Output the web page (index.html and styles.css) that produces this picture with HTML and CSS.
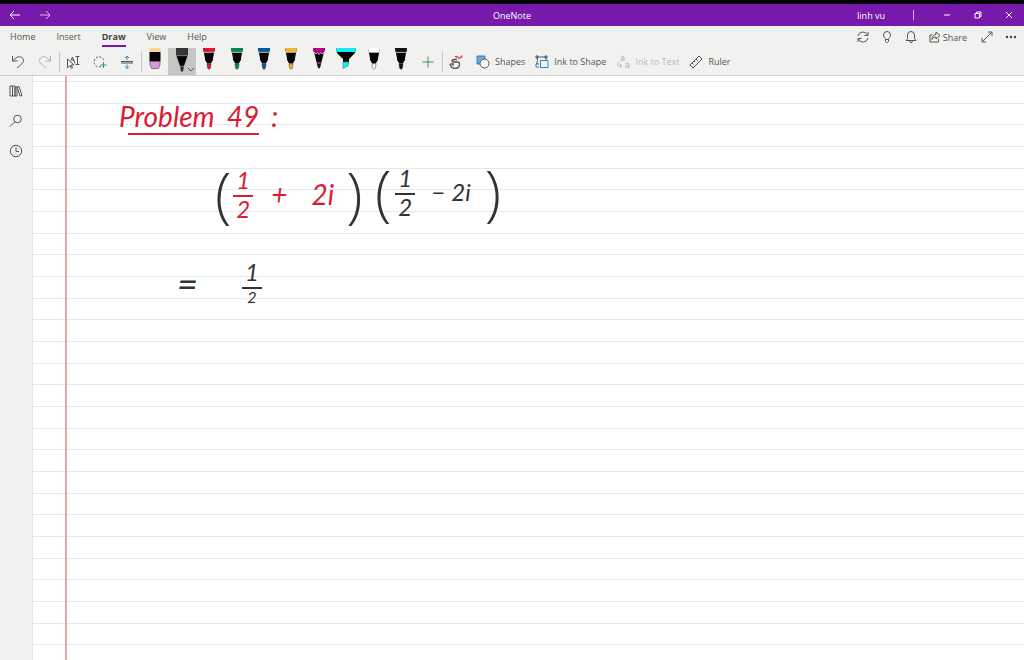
FILE: index.html
```html
<!DOCTYPE html>
<html lang="en">
<head>
<meta charset="utf-8">
<title>OneNote</title>
<link rel="stylesheet" href="styles.css">
</head>
<body>
<svg class="defs" aria-hidden="true">
  <symbol id="pen" viewBox="0 0 14 24">
    <path d="M1 0H13L10.500 13H3.500Z" fill="#050505"/>
    <path d="M1 0H13L12.300 4H1.700Z" fill="currentColor"/>
    <path d="M1.500 4.400H12.500" stroke="#fff" stroke-width=".7"/>
    <path d="M3 11H11L9 15.500H5Z" fill="#050505"/>
    <path d="M5 15.800H9L8.500 20L7 21.500L5.500 20Z" fill="currentColor" stroke="#333" stroke-width=".5"/>
  </symbol>
</svg>
<div class="app">
  <header class="titlebar">
    <nav class="history">
      <button aria-label="Back"><svg width="12" height="10" viewBox="0 0 12 10"><path d="M11 5H1M5 1L1 5L5 9"/></svg></button>
      <button class="dim" aria-label="Forward"><svg width="12" height="10" viewBox="0 0 12 10"><path d="M1 5H11M7 1L11 5L7 9"/></svg></button>
    </nav>
    <span class="title">OneNote</span>
    <div class="window">
      <span class="user">linh vu</span>
      <span class="bar"></span>
      <button aria-label="Minimize"><svg width="8" height="8" viewBox="0 0 8 8"><path d="M1 4H7"/></svg></button>
      <button aria-label="Restore"><svg width="8" height="8" viewBox="0 0 8 8"><path d="M1 2.500H5.500V7H1ZM2.500 2V1H7V5.500H6"/></svg></button>
      <button aria-label="Close"><svg width="8" height="8" viewBox="0 0 8 8"><path d="M1 1L7 7M7 1L1 7"/></svg></button>
    </div>
  </header>

  <div class="ribbon">
    <div class="tabrow">
      <nav class="tabs">
        <button>Home</button><button>Insert</button><button class="active">Draw</button><button>View</button><button>Help</button>
      </nav>
      <div class="actions">
        <button aria-label="Sync"><svg width="12" height="12" viewBox="0 0 12 12"><path d="M1 5A5 5 0 0 1 10.500 4M11 1V4.500H7.500M11 7A5 5 0 0 1 1.500 8M1 11V7.500H4.500"/></svg></button>
        <button aria-label="Tell me"><svg width="12" height="12" viewBox="0 0 12 12"><path d="M4.500 8.500C4.500 7 2.500 6.500 2.500 4A3.500 3.500 0 0 1 9.500 4C9.500 6.500 7.500 7 7.500 8.500ZM4.500 8.500V10.500L5.500 11.500H6.500L7.500 10.500V8.500"/></svg></button>
        <button aria-label="Notifications"><svg width="12" height="12" viewBox="0 0 12 12"><path d="M1 9.500H11L9.500 7.500V4A3.500 3.500 0 0 0 2.500 4V7.500ZM4.500 10A1.500 1.500 0 0 0 7.500 10"/></svg></button>
        <button class="share"><svg width="12" height="12" viewBox="0 0 12 12"><path d="M3 4H1V11H9.500V8M7 1L11 4.500L7 8V6C5 6 4 6.500 3 8.500C3 5.500 4.500 3.500 7 3.300Z"/></svg>Share</button>
        <button aria-label="Full screen"><svg width="12" height="12" viewBox="0 0 12 12"><path d="M1.500 10.500L10.500 1.500M7 1H11V5M1 7V11H5"/></svg></button>
        <button aria-label="More"><svg class="dots" width="12" height="12" viewBox="0 0 12 12"><circle cx="2" cy="6" r="1.200"/><circle cx="6" cy="6" r="1.200"/><circle cx="10" cy="6" r="1.200"/></svg></button>
      </div>
    </div>

    <div class="tools">
      <div class="group">
        <button aria-label="Undo"><svg width="14" height="14" viewBox="0 0 14 14"><path d="M1.500 1V6H6.500M1.500 6L5 3C8 .5 12.500 2 12.500 5.500C12.500 8 10 9.500 6 13"/></svg></button>
        <button class="faded" aria-label="Redo"><svg width="14" height="14" viewBox="0 0 14 14"><path d="M12.500 1V6H7.500M12.500 6L9 3C6 .5 1.500 2 1.500 5.500C1.500 8 4 9.500 8 13"/></svg></button>
      </div>
      <div class="group ruled">
        <button aria-label="Select text or objects"><svg width="14" height="14" viewBox="0 0 14 14"><path d="M1.500 4V13L4 10.500L5.500 13.500L6.500 13L5.300 10H8ZM5 5.500L6.500 2L9 8.500M5.500 5H8M9.500 1.500H13.500M9.500 9.500H13.500M11.500 1.500V9.500"/></svg></button>
        <button aria-label="Lasso select"><svg width="14" height="14" viewBox="0 0 14 14"><path d="M8 11.500A5 5 0 1 1 11 6" stroke-dasharray="2 1.500"/><path class="green" d="M10.500 7V13M7.500 10H13.500"/></svg></button>
        <button aria-label="Insert space"><svg width="14" height="14" viewBox="0 0 14 14"><path d="M1 6.500H13M1 8H13"/><path class="blue" d="M7 5V1M5 3L7 1L9 3M7 9.500V13.500M5 11.500L7 13.500L9 11.500"/></svg></button>
      </div>
      <div class="pens">
        <button aria-label="Eraser"><svg class="pen" width="14" height="24" viewBox="0 0 14 24"><path d="M1.500 0H12.500V4H1.500Z" fill="#f8d698"/><path d="M1.500 4H12.500V13.500H1.500Z" fill="#050505"/><path d="M2 13.500H12V17L10.500 20.500H3.500L2 17Z" fill="#d69ae0" stroke="#555" stroke-width=".7"/></svg></button>
        <button class="selected" aria-label="Dark gray pen"><svg class="pen" width="14" height="24" viewBox="0 0 14 24"><path d="M1 0H13V6L12.500 8H1.500L1 6Z" fill="#363636"/><path d="M1.500 8H12.500L9 18H5Z" fill="#050505"/><path d="M1.500 7.700H12.500M5 18.300H9" stroke="#aaa" stroke-width=".6"/><path d="M5.200 18.600H8.800L8 23.500H6Z" fill="#222"/></svg><svg class="chevron" width="8" height="6" viewBox="0 0 8 6"><path d="M1 1L4 4L7 1"/></svg></button>
        <button aria-label="Red pen"><svg class="pen red" width="14" height="24"><use href="#pen"/></svg></button>
        <button aria-label="Green pen"><svg class="pen emerald" width="14" height="24"><use href="#pen"/></svg></button>
        <button aria-label="Blue pen"><svg class="pen navy" width="14" height="24"><use href="#pen"/></svg></button>
        <button aria-label="Yellow pen"><svg class="pen gold" width="14" height="24"><use href="#pen"/></svg></button>
        <button aria-label="Magenta pen"><svg class="pen" width="14" height="24" viewBox="0 0 14 24"><path d="M1 0H13L8 20H6Z" fill="#050505"/><path d="M1 0H13L12.500 4L10 5.500L8.500 4L7 6L5.500 4L4 5.500L1.500 4Z" fill="#b3008c"/><path d="M1.500 4L4 6L5.500 4.500L7 6.500L8.500 4.500L10 6L12.500 4" stroke="#fff" stroke-width=".7"/><path d="M5 14H9L7 21Z" fill="#823573"/><path d="M6 16H8L7 21Z" fill="#050505"/></svg></button>
        <button aria-label="Cyan highlighter"><svg class="pen" width="20" height="24" viewBox="0 0 20 24"><path d="M0 0H20L19 5L13 11V14H7V11L1 5Z" fill="#050505"/><path d="M0 0H20L19.500 4H.5Z" fill="#18eaf1"/><path d="M7 14H13L12 18L7 20.500Z" fill="#18eaf1" stroke="#167c80" stroke-width=".5"/></svg></button>
        <button aria-label="White pen"><svg class="pen white" width="14" height="24"><use href="#pen"/></svg></button>
        <button aria-label="Black pen"><svg class="pen black" width="14" height="24"><use href="#pen"/></svg></button>
        <button aria-label="Add pen"><svg width="12" height="12" viewBox="0 0 12 12"><path class="green" d="M6 .5V11.500M.5 6H11.500"/></svg></button>
      </div>
      <div class="group ruled labelled">
        <button aria-label="Draw with touch"><svg width="14" height="14" viewBox="0 0 14 14"><path d="M8 4.500H5.500Q3 4.500 3 6Q3 7 5 7H8.500Q10.500 7 10.500 9C10.500 12 9 13.500 6 13.500C3.500 13.500 2 12 1 9.500Q2 8 4 10V7" stroke-width="1.300"/><path class="crimson" d="M6 2C8 0 9 4 11 3C12.500 2.500 12 1 13.500 1" stroke-width="1.300"/></svg></button>
        <button class="shapes"><svg width="14" height="14" viewBox="0 0 14 14"><path d="M1 1H9V9H1Z" fill="#69a9d8" stroke="#3781b9"/><circle cx="8.500" cy="8.500" r="4.500" fill="#f5f5f4"/></svg>Shapes</button>
        <button><svg width="14" height="14" viewBox="0 0 14 14"><path d="M2 2H11V5M2 2Q3.500 6 1.500 9H4M1 1H3V3H1ZM10 1H12V3H10Z"/><path class="blue" d="M5.500 5.500H13V12.500H5.500ZM1 9V12H4"/></svg>Ink to Shape</button>
        <button disabled><svg width="14" height="14" viewBox="0 0 14 14"><path d="M5 2Q8 0 8 3V6M8 3.500Q4.500 3 5 5Q6 6.500 8 5M3.500 7Q0 9 2 11H5M4 9L6 11L4 13M9 9Q13 7 13 10V13M13 10.500Q9 10 9.500 12Q11 13.500 13 12"/></svg>Ink to Text</button>
        <button><svg width="14" height="14" viewBox="0 0 14 14"><path d="M1 10L10 1L13 4L4 13ZM3 8L4.500 9.500M5 6L6 7M7 4L8.500 5.500"/></svg>Ruler</button>
      </div>
    </div>
  </div>

  <div class="workspace">
    <aside class="rail">
      <button aria-label="Notebooks"><svg width="14" height="14" viewBox="0 0 14 14"><path d="M1 2H3.500V12H1ZM3.500 2H6V12H3.500ZM6 3H8V12H6ZM8 3L10 2.500L13 11.500L11 12Z"/></svg></button>
      <button aria-label="Search"><svg width="14" height="14" viewBox="0 0 14 14"><circle cx="8.500" cy="5" r="3.800"/><path d="M5.800 7.700L1 12.500"/></svg></button>
      <button aria-label="Recent notes"><svg width="14" height="14" viewBox="0 0 14 14"><circle cx="7" cy="7" r="5.700"/><path d="M7 3.500V7.500H10"/></svg></button>
    </aside>
    <main class="page">
      <h1 class="ink heading"><span>Problem</span><span>49</span><span>:</span></h1>
      <div class="ink first">
        <span class="paren">(</span>
        <span class="fraction crimson-ink"><span>1</span><span>2</span></span>
        <span class="plus crimson-ink">+</span>
        <span class="term crimson-ink">2i</span>
        <span class="paren close">)</span>
      </div>
      <div class="ink second">
        <span class="paren">(</span>
        <span class="fraction"><span>1</span><span>2</span></span>
        <span class="minus">−</span>
        <span class="term">2i</span>
        <span class="paren close">)</span>
      </div>
      <div class="ink result">
        <span class="equals">=</span>
        <span class="fraction"><span>1</span><span class="small">2</span></span>
      </div>
    </main>
  </div>
</div>
</body>
</html>
```
FILE: styles.css
```css
* { box-sizing: border-box; }
body { margin: 0; font-family: "Open Sans", "Noto Sans", sans-serif; font-size: 9px; color: #555; background: #fff; }
button { margin: 0; padding: 0; border: 0; background: none; font: inherit; color: inherit; display: flex; align-items: center; justify-content: center; }
svg { flex: none; fill: none; stroke: currentColor; stroke-width: 1; }
.defs { position: absolute; width: 0; height: 0; }
.app { min-height: 100vh; display: flex; flex-direction: column; }

.titlebar { border-top: 4px solid #000; height: 26px; background: #7719aa; color: #fff; display: grid; grid-template-columns: 1fr auto 1fr; align-items: center; }
.history { display: flex; gap: 18px; padding-left: 9px; }
.history .dim { opacity: .7; }
.window { display: flex; align-items: center; justify-content: flex-end; }
.window button { width: 31px; height: 22px; }
.bar { width: 1px; height: 10px; background: #d3b1e4; margin: 0 17px 0 28px; }

.ribbon { background: #f1f1ef; height: 50px; border-bottom: 1px solid #d2d2d0; display: flex; flex-direction: column; }
.tabrow { display: flex; justify-content: space-between; height: 22px; }
.tabs { display: flex; gap: 21px; padding-left: 10px; }
.tabs button { height: 21px; border-bottom: 2px solid transparent; border-top: 2px solid transparent; }
.tabs .active { font-weight: 700; color: #444; border-bottom-color: #7719aa; }
.actions { display: flex; align-items: center; gap: 12px; padding-right: 7px; }
.share { gap: 2px; margin-right: 2px; }
.dots { fill: #444; stroke: none; }

.tools { display: flex; flex: 1; padding-left: 4px; }
.group { display: flex; height: 27px; }
.group button { width: 27px; height: 27px; }
.ruled { background: linear-gradient(#c6c6c4, #c6c6c4) 0 4px / 1px 20px no-repeat; margin-left: 1px; }
.faded { opacity: .4; }
.pens { display: grid; grid-template-columns: repeat(11, 1fr); width: 301px; height: 27px; background: linear-gradient(#c6c6c4, #c6c6c4) 0 4px / 1px 20px no-repeat; margin-left: 1px; }
.pens button { position: relative; }
.pen { align-self: flex-start; stroke: none; }
.selected { background: #c5c5c4; }
.chevron { position: absolute; right: 1px; bottom: 2px; }
.red { color: #db1834; }
.emerald { color: #08894a; }
.navy { color: #075b99; }
.gold { color: #edb42d; }
.white { color: #fff; }
.black { color: #111; }
.green { stroke: #35966c; }
.blue { stroke: #2e83ba; }
.crimson { stroke: #dc3548; }
.labelled { margin-left: 0; }
.labelled button:not(:first-child) { width: auto; gap: 5px; margin-left: 10px; }
.labelled button.shapes:not(:first-child) { margin-left: 7px; }
button:disabled { color: #bbb; }

.workspace { flex: 1; display: flex; }
.rail { width: 33px; background: #f1f1ef; border-right: 1px solid #e3e5e6; display: flex; flex-direction: column; }
.rail button { width: 32px; height: 30px; }
.page { flex: 1; position: relative; background:
  linear-gradient(#f0a2aa, #f0a2aa) 32px 0 / 2px 100% no-repeat,
  repeating-linear-gradient(transparent 0 5px, #daeef2 5px 6px, transparent 6px 27px, #daeef2 27px 28px, transparent 28px 48px, #daeef2 48px 49px, transparent 49px 65px); }

/* Ink sits freely on the page canvas. */
.ink { position: absolute; margin: 0; font-family: Lato, "Open Sans", sans-serif; font-style: italic; font-weight: 400; font-size: 24px; line-height: 24px; color: #333; white-space: nowrap; display: flex; align-items: center; }
.heading, .crimson-ink { color: #d91c34; }
.heading { left: 86px; top: 28px; font-size: 28px; line-height: 24px; gap: 12px; }
.heading::after { content: ""; position: absolute; left: 9px; width: 131px; bottom: -7px; border-bottom: 2px solid #d91c34; }
.first { left: 182px; top: 86px; }
.second { left: 342px; top: 84px; }
.result { left: 144px; top: 184px; }
.fraction { display: flex; flex-direction: column; align-items: center; width: 20px; }
.fraction span:first-child { align-self: stretch; text-align: center; border-bottom: 2px solid; padding-bottom: 3px; }
.paren { font-family: "Open Sans", sans-serif; font-weight: 300; font-size: 60px; line-height: 64px; font-style: normal; }
.first .fraction { margin-left: 2px; }
.first .plus { margin: 0 24px 0 18px; font-size: 28px; }
.first .term { font-size: 28px; }
.first .close { margin-left: 12px; }
.second .fraction { margin-left: 4px; }
.second .minus { margin-left: 16px; }
.second .term { margin: 0 14px 0 6px; }
.equals { font-size: 36px; margin-right: 44px; }
.small { font-size: 16px; line-height: 16px; }
```
